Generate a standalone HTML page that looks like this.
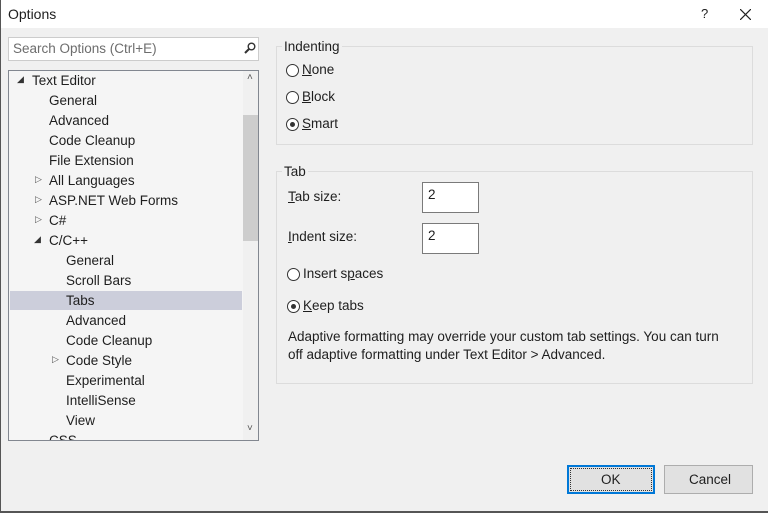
<!DOCTYPE html><html><head><style>
body{margin:0;width:768px;height:513px;background:#f0f0f0;font-family:"Liberation Sans",sans-serif;font-size:13.5px;color:#1e1e1e;position:relative;overflow:hidden}
.a{position:absolute;white-space:nowrap}
.r{position:absolute;width:11px;height:11px;border:1px solid #333;border-radius:50%;background:#fff}
.r.on::after{content:"";position:absolute;left:3px;top:3px;width:5px;height:5px;border-radius:50%;background:#333}
.t{position:absolute;left:0;font-size:8px;color:#444}
u{text-decoration:underline}
</style></head><body>
<div class="a" style="left:0;top:0;width:768px;height:28px;background:#fff"></div>
<div class="a" style="left:8px;top:6px;font-size:14px">Options</div>
<div class="a" style="left:701px;top:6px;font-size:13px">?</div>
<svg class="a" style="left:740px;top:9px" width="11" height="11"><path d="M0 0L11 11M11 0L0 11" stroke="#222" stroke-width="1.2"/></svg>
<div class="a" style="left:0;top:0;width:1px;height:513px;background:#555"></div>
<div class="a" style="left:0;top:511px;width:768px;height:2px;background:#555"></div>

<div class="a" style="left:8px;top:37px;width:249px;height:22px;background:#fff;border:1px solid #ccc"></div>
<div class="a" style="left:13px;top:41px;color:#6d6d6d">Search Options (Ctrl+E)</div>
<svg class="a" style="left:244px;top:42px" width="12" height="12"><circle cx="7.5" cy="4.5" r="3.3" fill="none" stroke="#333" stroke-width="1.4"/><path d="M5 7L1 11" stroke="#333" stroke-width="2"/></svg>

<div class="a" style="left:8px;top:70px;width:249px;height:369px;background:#f5f5f5;border:1px solid #828790;overflow:hidden">
<div class="a" style="left:234px;top:0;width:15px;height:369px;background:#f0f0f0"></div>
<div class="a" style="left:234px;top:44px;width:15px;height:126px;background:#cdcdcd"></div>
<div class="a" style="left:238px;top:1px;font-size:10px;color:#555">&#708;</div>
<div class="a" style="left:238px;top:352px;font-size:10px;color:#555">&#709;</div>
<div class="a" style="left:1px;top:220px;width:232px;height:19px;background:#cccedb"></div>
<div class="a" style="left:8px;top:3px;font-size:9px;color:#333">&#9698;</div>
<div class="a" style="left:23px;top:2px">Text Editor</div>
<div class="a" style="left:40px;top:22px">General</div>
<div class="a" style="left:40px;top:42px">Advanced</div>
<div class="a" style="left:40px;top:62px">Code Cleanup</div>
<div class="a" style="left:40px;top:82px">File Extension</div>
<div class="a" style="left:26px;top:103px;font-size:9px;color:#555">&#9655;</div>
<div class="a" style="left:40px;top:102px">All Languages</div>
<div class="a" style="left:26px;top:123px;font-size:9px;color:#555">&#9655;</div>
<div class="a" style="left:40px;top:122px">ASP.NET Web Forms</div>
<div class="a" style="left:26px;top:143px;font-size:9px;color:#555">&#9655;</div>
<div class="a" style="left:40px;top:142px">C#</div>
<div class="a" style="left:25px;top:163px;font-size:9px;color:#333">&#9698;</div>
<div class="a" style="left:40px;top:162px">C/C++</div>
<div class="a" style="left:57px;top:182px">General</div>
<div class="a" style="left:57px;top:202px">Scroll Bars</div>
<div class="a" style="left:57px;top:222px">Tabs</div>
<div class="a" style="left:57px;top:242px">Advanced</div>
<div class="a" style="left:57px;top:262px">Code Cleanup</div>
<div class="a" style="left:43px;top:283px;font-size:9px;color:#555">&#9655;</div>
<div class="a" style="left:57px;top:282px">Code Style</div>
<div class="a" style="left:57px;top:302px">Experimental</div>
<div class="a" style="left:57px;top:322px">IntelliSense</div>
<div class="a" style="left:57px;top:342px">View</div>
<div class="a" style="left:40px;top:362px">CSS</div>
</div>

<div class="a" style="left:276px;top:46px;width:475px;height:97px;border:1px solid #dcdcdc"></div>
<div class="a" style="left:282px;top:39px;background:#f0f0f0;padding:0 2px">Indenting</div>
<div class="r" style="left:286px;top:64px"></div><div class="a" style="left:302px;top:62px"><u>N</u>one</div>
<div class="r" style="left:286px;top:91px"></div><div class="a" style="left:302px;top:89px"><u>B</u>lock</div>
<div class="r on" style="left:286px;top:118px"></div><div class="a" style="left:302px;top:116px"><u>S</u>mart</div>

<div class="a" style="left:276px;top:171px;width:475px;height:211px;border:1px solid #dcdcdc"></div>
<div class="a" style="left:282px;top:164px;background:#f0f0f0;padding:0 2px">Tab</div>
<div class="a" style="left:288px;top:189px"><u>T</u>ab size:</div>
<div class="a" style="left:422px;top:182px;width:55px;height:29px;background:#fff;border:1px solid #7a7a7a"></div>
<div class="a" style="left:428px;top:187px">2</div>
<div class="a" style="left:288px;top:229px"><u>I</u>ndent size:</div>
<div class="a" style="left:422px;top:223px;width:55px;height:29px;background:#fff;border:1px solid #7a7a7a"></div>
<div class="a" style="left:428px;top:228px">2</div>
<div class="r" style="left:287px;top:268px"></div><div class="a" style="left:303px;top:266px">Insert s<u>p</u>aces</div>
<div class="r on" style="left:287px;top:300px"></div><div class="a" style="left:303px;top:298px"><u>K</u>eep tabs</div>
<div class="a" style="left:288px;top:328px;line-height:18px">Adaptive formatting may override your custom tab settings. You can turn<br>off adaptive formatting under Text Editor &gt; Advanced.</div>

<div class="a" style="left:567px;top:465px;width:86px;height:27px;background:#e1e1e1;border:1px solid #0078d7;box-shadow:inset 0 0 0 1px #0078d7"></div>
<div class="a" style="left:570px;top:468px;width:80px;height:21px;border:1px dotted #333"></div>
<div class="a" style="left:601px;top:472px">OK</div>
<div class="a" style="left:664px;top:465px;width:87px;height:27px;background:#e1e1e1;border:1px solid #adadad"></div>
<div class="a" style="left:689px;top:472px">Cancel</div>
</body></html>
